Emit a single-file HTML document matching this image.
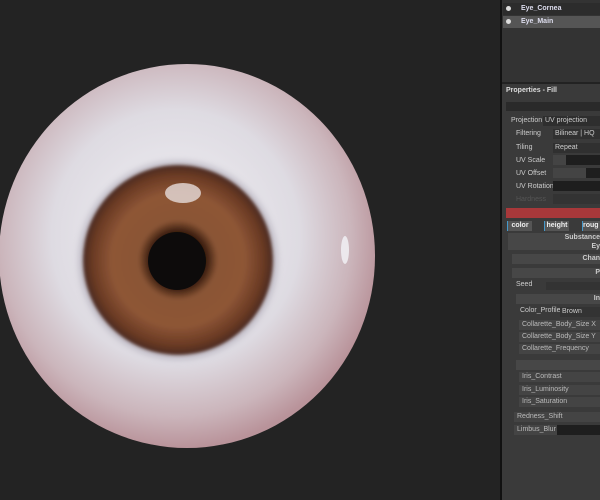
<!DOCTYPE html><html><head><style>
body{margin:0;width:600px;height:500px;overflow:hidden;background:#232323;font-family:"Liberation Sans",sans-serif;font-size:7px;color:#ccc;position:relative}
.a{position:absolute}
.row{position:absolute;left:0;right:0;height:11px;line-height:11px}
.f{position:absolute;background:#2a2a2a;height:10px;line-height:10px}
.lb{position:absolute;background:#444;height:10px;line-height:10px;padding-left:3px;color:#bbb}
</style></head><body>
<svg class="a" style="left:0;top:0" width="500" height="500">
<defs>
<radialGradient id="w" cx="0.47" cy="0.45" r="0.55"><stop offset="0" stop-color="#f2f1f5"/><stop offset="0.6" stop-color="#dedbe2"/><stop offset="0.85" stop-color="#cbb5bb"/><stop offset="1" stop-color="#b9939a"/></radialGradient>
<radialGradient id="i" cx="0.5" cy="0.5" r="0.5"><stop offset="0.3" stop-color="#3a1d10"/><stop offset="0.42" stop-color="#8a5535"/><stop offset="0.7" stop-color="#8e5636"/><stop offset="0.9" stop-color="#6a3a24"/><stop offset="1" stop-color="#4a2a20"/></radialGradient>
<filter id="b"><feGaussianBlur stdDeviation="3"/></filter>
<filter id="b2"><feGaussianBlur stdDeviation="1.5"/></filter>
</defs>
<ellipse cx="187" cy="256" rx="188" ry="192" fill="url(#w)"/>
<circle cx="178" cy="260" r="100" fill="#a7a3b0" opacity="0.5" filter="url(#b)"/>
<circle cx="178" cy="260" r="95" fill="url(#i)" filter="url(#b2)"/>
<circle cx="177" cy="261" r="29" fill="#0d0b0b"/>
<ellipse cx="183" cy="193" rx="18" ry="10" fill="#e0d4d0" opacity="0.85"/>
<ellipse cx="345" cy="250" rx="4" ry="14" fill="#f4f4f8" opacity="0.8"/>
</svg>
<div class="a" style="left:500px;top:0;width:2px;height:500px;background:#111"></div>
<div class="a" style="left:502px;top:0;width:98px;height:500px;background:#3a3a3a"></div>
<div class="a" style="left:502px;top:0;width:98px;height:82px;background:#333"></div>
<div class="row" style="left:503px;top:3px;height:12px;background:#2c2c2c;font-weight:bold;color:#dde;padding-left:18px">Eye_Cornea</div>
<div class="row" style="left:503px;top:16px;height:12px;background:#555;font-weight:bold;color:#dde;padding-left:18px">Eye_Main</div>
<div class="a" style="left:506px;top:6px;width:5px;height:5px;border-radius:50%;background:#ddd"></div>
<div class="a" style="left:506px;top:19px;width:5px;height:5px;border-radius:50%;background:#ddd"></div>
<div class="a" style="left:502px;top:82px;width:98px;height:2px;background:#222"></div>
<div class="a" style="left:506px;top:87px;font-weight:bold;color:#ddd">Properties - Fill</div>
<div class="a" style="left:506px;top:102px;width:94px;height:9px;background:#2a2a2a"></div>
<div class="a" style="left:511px;top:117px">Projection</div><div class="f" style="left:543px;top:116px;width:57px;background:#2e2e2e;padding-left:2px">UV projection</div>
<div class="a" style="left:516px;top:130px">Filtering</div><div class="f" style="left:553px;top:129px;width:47px;background:#303030;padding-left:2px">Bilinear | HQ</div>
<div class="a" style="left:516px;top:144px">Tiling</div><div class="f" style="left:553px;top:143px;width:47px;background:#303030;padding-left:2px">Repeat</div>
<div class="a" style="left:516px;top:157px">UV Scale</div><div class="f" style="left:553px;top:155px;width:47px;background:#1e1e1e"></div><div class="a" style="left:553px;top:155px;width:13px;height:10px;background:#444"></div>
<div class="a" style="left:516px;top:170px">UV Offset</div><div class="f" style="left:553px;top:168px;width:47px;background:#1e1e1e"></div><div class="a" style="left:553px;top:168px;width:33px;height:10px;background:#444"></div>
<div class="a" style="left:516px;top:183px">UV Rotation</div><div class="f" style="left:553px;top:181px;width:47px;background:#1e1e1e"></div>
<div class="a" style="left:516px;top:196px;color:#555">Hardness</div><div class="f" style="left:553px;top:194px;width:47px;background:#333"></div>
<div class="a" style="left:506px;top:208px;width:94px;height:10px;background:#a8383a"></div>
<div class="a" style="left:507px;top:221px;width:24px;height:10px;background:#555;border-left:1px solid #49c;font-weight:bold;color:#eee;text-align:center;line-height:10px">color</div>
<div class="a" style="left:544px;top:221px;width:24px;height:10px;background:#555;border-left:1px solid #49c;font-weight:bold;color:#eee;text-align:center;line-height:10px">height</div>
<div class="a" style="left:582px;top:221px;width:18px;height:10px;background:#555;border-left:1px solid #49c;font-weight:bold;color:#eee;line-height:10px">roug</div>
<div class="a" style="left:508px;top:233px;width:92px;height:17px;background:#474747;font-weight:bold;text-align:right;line-height:9px">Substance<br>Ey</div>
<div class="a" style="left:512px;top:254px;width:88px;height:10px;background:#474747;font-weight:bold;text-align:right;line-height:10px">Chan</div>
<div class="a" style="left:512px;top:268px;width:88px;height:10px;background:#474747;font-weight:bold;text-align:right;line-height:10px">P</div>
<div class="a" style="left:516px;top:281px">Seed</div><div class="f" style="left:546px;top:282px;width:54px;height:8px;background:#333"></div>
<div class="a" style="left:516px;top:294px;width:84px;height:10px;background:#474747;font-weight:bold;text-align:right;line-height:10px">In</div>
<div class="a" style="left:520px;top:307px">Color_Profile</div><div class="f" style="left:560px;top:307px;width:40px;background:#333;padding-left:2px">Brown</div>
<div class="lb" style="left:519px;top:320px;width:78px">Collarette_Body_Size X</div>
<div class="lb" style="left:519px;top:332px;width:78px">Collarette_Body_Size Y</div>
<div class="lb" style="left:519px;top:344px;width:78px">Collarette_Frequency</div>
<div class="a" style="left:516px;top:360px;width:84px;height:10px;background:#474747"></div>
<div class="lb" style="left:519px;top:372px;width:78px">Iris_Contrast</div>
<div class="lb" style="left:519px;top:385px;width:78px">Iris_Luminosity</div>
<div class="lb" style="left:519px;top:397px;width:78px">Iris_Saturation</div>
<div class="lb" style="left:514px;top:412px;width:83px">Redness_Shift</div>
<div class="lb" style="left:514px;top:425px;width:40px">Limbus_Blur</div><div class="a" style="left:557px;top:425px;width:43px;height:10px;background:#1e1e1e"></div>
</body></html>
